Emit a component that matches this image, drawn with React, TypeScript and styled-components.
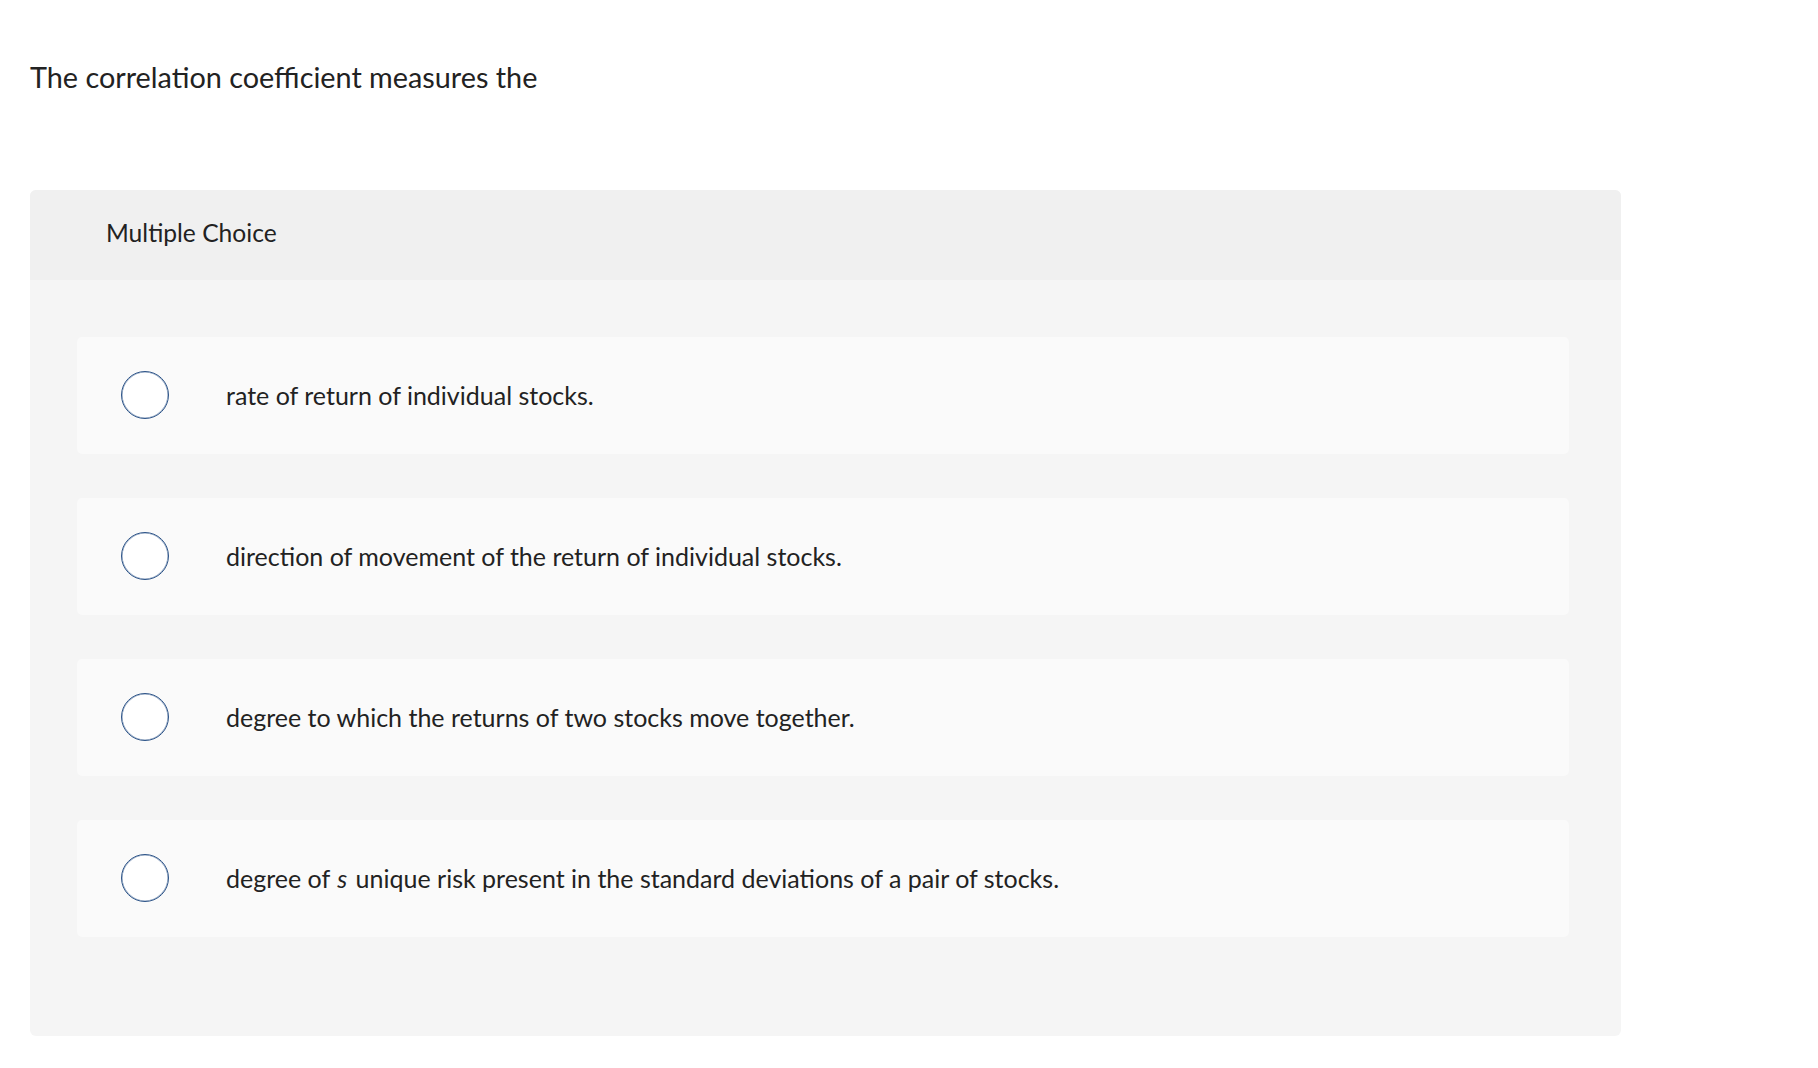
import * as React from "react"
import styled, { createGlobalStyle } from "styled-components"

const GlobalStyle = createGlobalStyle`
  html, body {
    margin: 0;
    padding: 0;
    background: #ffffff;
  }
  body {
    font-family: Lato, "Open Sans", "Liberation Sans", sans-serif;
    color: #222222;
  }
`

const options = [
  { id: "a", label: <>rate of return of individual stocks.</> },
  { id: "b", label: <>direction of movement of the return of individual stocks.</> },
  { id: "c", label: <>degree to which the returns of two stocks move together.</> },
  {
    id: "d",
    label: (
      <>
        degree of <em>s</em> unique risk present in the standard deviations of a pair of stocks.
      </>
    ),
  },
]

const Page = styled.div`
  padding: 60px 197px 32px 30px;
`

const Prompt = styled.p`
  margin: 0 0 95px;
  font-size: 28.8px;
  line-height: 1.2;
  color: #222222;
`

const Panel = styled.section`
  background: #f5f5f5;
  border-radius: 6px;
  overflow: hidden;
`

const PanelHeader = styled.div`
  height: 90px;
  box-sizing: border-box;
  padding: 28px 0 0 76px;
  background: #f0f0f0;
  font-size: 24.6px;
  line-height: 1.2;
`

const Choices = styled.div`
  display: flex;
  flex-direction: column;
  gap: 44px;
  padding: 57px 52px 99px 47px;
`

const Choice = styled.label`
  display: flex;
  align-items: center;
  height: 117px;
  padding-left: 44px;
  box-sizing: border-box;
  background: #fafafa;
  border-radius: 5px;
  cursor: pointer;
`

const RadioCircle = styled.input.attrs({ type: "radio" })`
  appearance: none;
  flex-shrink: 0;
  width: 48px;
  height: 48px;
  margin: 0 57px 0 0;
  box-sizing: border-box;
  border: 1px solid #2d5488;
  box-shadow: inset 0 0 0 0.6px rgba(45, 84, 136, 0.55);
  border-radius: 50%;
  background: #ffffff;
  cursor: pointer;
`

const ChoiceText = styled.span`
  font-size: 25px;
  line-height: 1.2;
  color: #222222;

  em {
    font-style: italic;
    margin: 0 2px 0 1px;
  }
`

export default function App() {
  return (
    <>
      <GlobalStyle />
      <Page>
        <Prompt>The correlation coefficient measures the</Prompt>
        <Panel>
          <PanelHeader>Multiple Choice</PanelHeader>
          <Choices>
            {options.map(o => (
              <Choice key={o.id}>
                <RadioCircle name="mc" value={o.id} />
                <ChoiceText>{o.label}</ChoiceText>
              </Choice>
            ))}
          </Choices>
        </Panel>
      </Page>
    </>
  )
}
